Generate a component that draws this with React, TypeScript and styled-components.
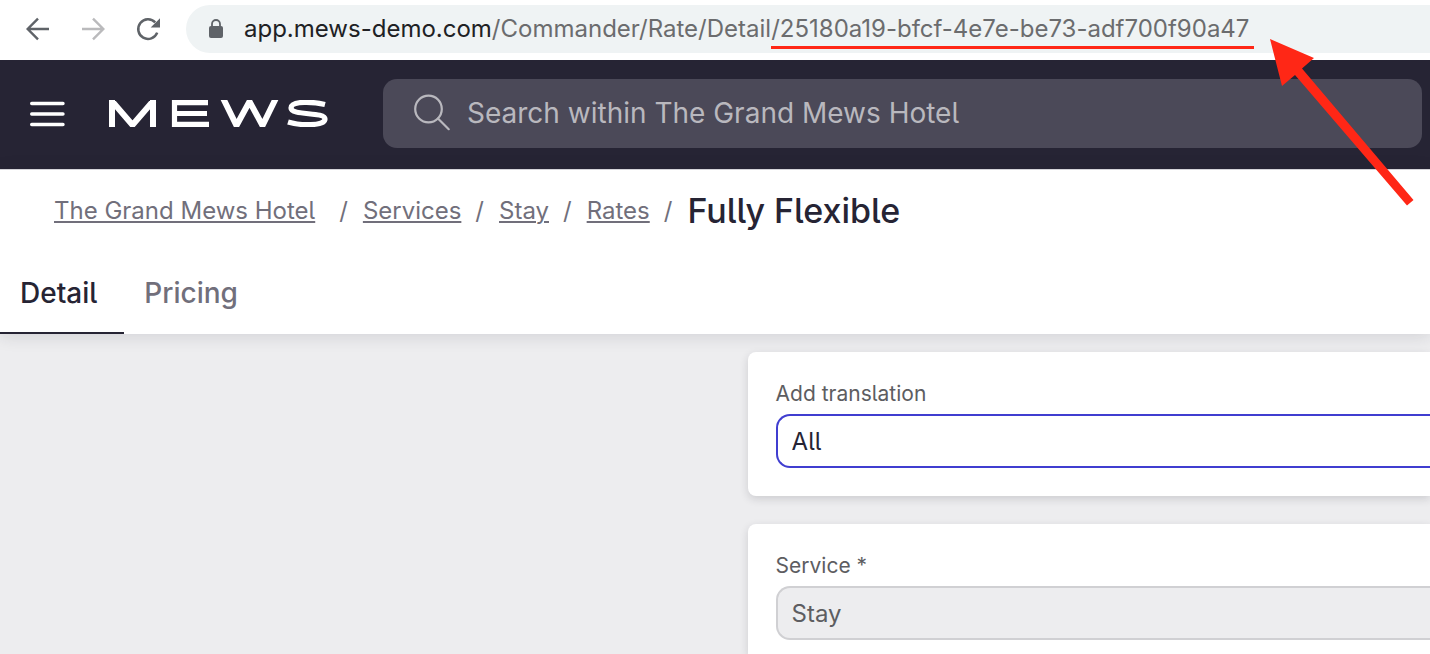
import React from 'react';
import styled, { createGlobalStyle } from 'styled-components';

const GlobalStyle = createGlobalStyle`
  *, *::before, *::after { box-sizing: border-box; }
  body {
    margin: 0;
    background: #ededef;
    font-family: Inter, "Liberation Sans", sans-serif;
    overflow-x: hidden;
  }
`;

const Page = styled.div`
  display: flex;
  flex-direction: column;
  min-height: 100vh;
  overflow: hidden;
  font-feature-settings: 'cv05' 1;
`;

const BrowserBar = styled.div`
  display: flex;
  align-items: center;
  height: 60px;
  padding: 0 0 2px 24px;
  background: #fff;
`;

const BrowserNav = styled.nav`
  display: flex;
  gap: 27px;
  padding-right: 24px;
`;

const IconButton = styled.button`
  display: flex;
  flex: none;
  align-items: center;
  justify-content: center;
  padding: 0;
  border: 0;
  background: none;
  color: #5f6368;
  &:disabled { color: #bababc; }
`;

const AddressBar = styled.div`
  display: flex;
  flex: 1;
  align-items: center;
  gap: 20px;
  height: 48px;
  padding-left: 22px;
  border-radius: 24px 0 0 24px;
  background: #eff3f4;
  color: #5f6368;
`;

const Url = styled.div`
  position: relative;
  z-index: 2;
  font-size: 24px;
  line-height: 32px;
  white-space: nowrap;
  color: #6b6c6e;
  font-feature-settings: normal;
`;

const Domain = styled.span`
  color: #202124;
`;

const Identifier = styled.span`
  position: relative;
  &::after {
    content: '';
    position: absolute;
    left: -9px;
    right: -5px;
    bottom: -6px;
    height: 3px;
    background: #ff2716;
  }
`;

const Arrow = styled.svg`
  position: absolute;
  top: 26px;
  left: 100%;
  margin-left: 21px;
  pointer-events: none;
`;

const AppHeader = styled.header`
  display: flex;
  align-items: center;
  height: 109px;
  padding: 0 8px 2px 30px;
  background: #262434;
  color: #fff;
`;

const Logo = styled.svg`
  flex: none;
  margin: 0 55px 0 44px;
`;

const SearchBox = styled.label`
  display: flex;
  flex: 1;
  align-items: center;
  gap: 17px;
  height: 69px;
  padding: 0 30px 2px;
  border-radius: 14px;
  background: #4b4958;
  color: #b9b8be;
`;

const SearchInput = styled.input`
  flex: 1;
  min-width: 0;
  padding: 0;
  border: 0;
  outline: 0;
  background: none;
  color: inherit;
  font: inherit;
  font-size: 28px;
  line-height: 36px;
  &::placeholder { color: #b9b8be; opacity: 1; }
`;

const PageHead = styled.div`
  position: relative;
  height: 165px;
  border-top: 1px solid #d4d3d8;
  background: #fff;
  box-shadow: 0 2px 16px rgba(38, 36, 52, 0.14);
`;

const Breadcrumbs = styled.ol`
  display: flex;
  align-items: center;
  gap: 15px;
  height: 82px;
  margin: 0;
  padding: 0 0 0 54px;
  list-style: none;
  color: #716f7b;
  font-size: 24px;
  line-height: 44px;
  white-space: nowrap;
`;

const Crumb = styled.li<{ $root?: boolean }>`
  display: flex;
  gap: ${(p) => (p.$root ? 24 : 14)}px;
  &:not(:last-child)::after { content: '/'; }
`;

const CrumbLink = styled.a`
  color: inherit;
  text-decoration: underline;
  text-decoration-thickness: 2px;
  text-underline-offset: 2px;
`;

const Title = styled.h1`
  margin: 0;
  color: #262434;
  font-size: 34px;
  font-weight: 500;
  line-height: 44px;
`;

const Tabs = styled.div`
  display: flex;
  height: 82px;
`;

const Tab = styled.button<{ $active?: boolean }>`
  padding: 2px 27px 0 20px;
  border: 0;
  border-bottom: 2px solid ${(p) => (p.$active ? '#262434' : 'transparent')};
  background: none;
  color: ${(p) => (p.$active ? '#262434' : '#716f7b')};
  font: inherit;
  font-size: 28px;
  font-weight: 500;
  line-height: 36px;
`;

const Content = styled.main`
  display: flex;
  flex: 1;
  flex-direction: column;
  gap: 28px;
  padding: 18px 0 0 calc(52% + 4px);
`;

const Card = styled.section`
  display: flex;
  flex-direction: column;
  gap: 6px;
  padding: 28px 0 28px 28px;
  border-radius: 8px 0 0 8px;
  background: #fff;
  box-shadow: 0 3px 8px rgba(38, 36, 52, 0.16);
  &:last-child {
    flex: 1;
    padding-bottom: 14px;
    border-radius: 8px 0 0 0;
  }
`;

const Label = styled.label`
  color: #5d5d61;
  font-size: 21px;
  line-height: 28px;
`;

const Select = styled.select`
  appearance: none;
  width: 100%;
  height: 54px;
  padding: 0 14px;
  border: 2px solid #403ed0;
  border-right: 0;
  border-radius: 14px 0 0 14px;
  outline: 0;
  background: #fff;
  color: #262434;
  font: inherit;
  font-size: 24px;
  font-feature-settings: inherit;
  &:disabled {
    border-color: #d0d0d3;
    background: #ededef;
    color: #5d5d61;
    opacity: 1;
  }
`;

const crumbs = ['The Grand Mews Hotel', 'Services', 'Stay', 'Rates'];

export default function App() {
  return (
    <Page>
      <GlobalStyle />
      <BrowserBar>
        <BrowserNav aria-label="Browser">
          <IconButton aria-label="Back">
            <svg width="28" height="28" viewBox="0 0 28 28" fill="none" stroke="currentColor" strokeWidth="2.4">
              <path d="M25 14H4M14 3.7 3.7 14 14 24.3" />
            </svg>
          </IconButton>
          <IconButton aria-label="Forward" disabled>
            <svg width="28" height="28" viewBox="0 0 28 28" fill="none" stroke="currentColor" strokeWidth="2.4">
              <path d="M3 14h21M14 3.7 24.3 14 14 24.3" />
            </svg>
          </IconButton>
          <IconButton aria-label="Reload">
            <svg width="28" height="28" viewBox="0 0 28 28" fill="none" stroke="currentColor" strokeWidth="2.5">
              <path d="M23.2 17.6A9.800 9.800 0 1 1 21.2 7.400" />
              <path d="M26 3.200v9.300h-9.300z" fill="currentColor" stroke="none" />
            </svg>
          </IconButton>
        </BrowserNav>
        <AddressBar>
          <svg width="16" height="20" viewBox="0 0 16 20" fill="none">
            <rect x="1" y="7" width="14" height="12" rx="2" fill="currentColor" />
            <path d="M4 8V5a4 4 0 0 1 8 0v3" stroke="currentColor" strokeWidth="1.8" />
          </svg>
          <Url>
            <Domain>app.mews-demo.com</Domain>/Commander/Rate/Detail/
            <Identifier>25180a19-bfcf-4e7e-be73-adf700f90a47</Identifier>
            <Arrow width="146" height="168" viewBox="0 0 146 168" fill="#ff2716">
              <path d="M0 0 44 19 32 29.5 143.5 161 137 166.500 25 36 12 47z" />
            </Arrow>
          </Url>
        </AddressBar>
      </BrowserBar>
      <AppHeader>
        <IconButton aria-label="Menu">
          <svg width="35" height="26" viewBox="0 0 35 26" stroke="#fff" strokeWidth="3.4" strokeLinecap="round">
            <path d="M1.700 2.500H33M1.700 13H33M1.700 23.500H33" />
          </svg>
        </IconButton>
        <Logo width="219" height="27" viewBox="0 0 219 27" fill="none" stroke="#fff" strokeWidth="6" role="img" aria-label="Mews">
          <path d="M3 27V0M44 27V0M2 0 23.500 25 45 0" />
          <path d="M99 2.700H65.500V24.300H100M66 13.500H98" strokeWidth="5.200" />
          <path d="M114 -2 127.500 25.500 140.500 1.500 153.500 25.500 167 -2" />
          <path d="M216 4.500C206 2 182 0 182 8S216 11.500 216 19S190 25.500 179 22" strokeWidth="5.200" />
        </Logo>
        <SearchBox>
          <svg width="37" height="37" viewBox="0 0 37 37" fill="none" stroke="currentColor" strokeWidth="2.2" strokeLinecap="round">
            <circle cx="15.500" cy="15" r="13.300" />
            <path d="m25 24.500 10.700 10.700" />
          </svg>
          <SearchInput aria-label="Search" placeholder="Search within The Grand Mews Hotel" />
        </SearchBox>
      </AppHeader>
      <PageHead>
        <Breadcrumbs>
          {crumbs.map((name, i) => (
            <Crumb key={name} $root={i === 0}>
              <CrumbLink href="#">{name}</CrumbLink>
            </Crumb>
          ))}
          <Crumb>
            <Title>Fully Flexible</Title>
          </Crumb>
        </Breadcrumbs>
        <Tabs role="tablist">
          <Tab role="tab" aria-selected="true" $active>Detail</Tab>
          <Tab role="tab" aria-selected="false">Pricing</Tab>
        </Tabs>
      </PageHead>
      <Content>
        <Card>
          <Label htmlFor="translation">Add translation</Label>
          <Select id="translation">
            <option>All</option>
          </Select>
        </Card>
        <Card>
          <Label htmlFor="service">Service *</Label>
          <Select id="service" disabled>
            <option>Stay</option>
          </Select>
        </Card>
      </Content>
    </Page>
  );
}
